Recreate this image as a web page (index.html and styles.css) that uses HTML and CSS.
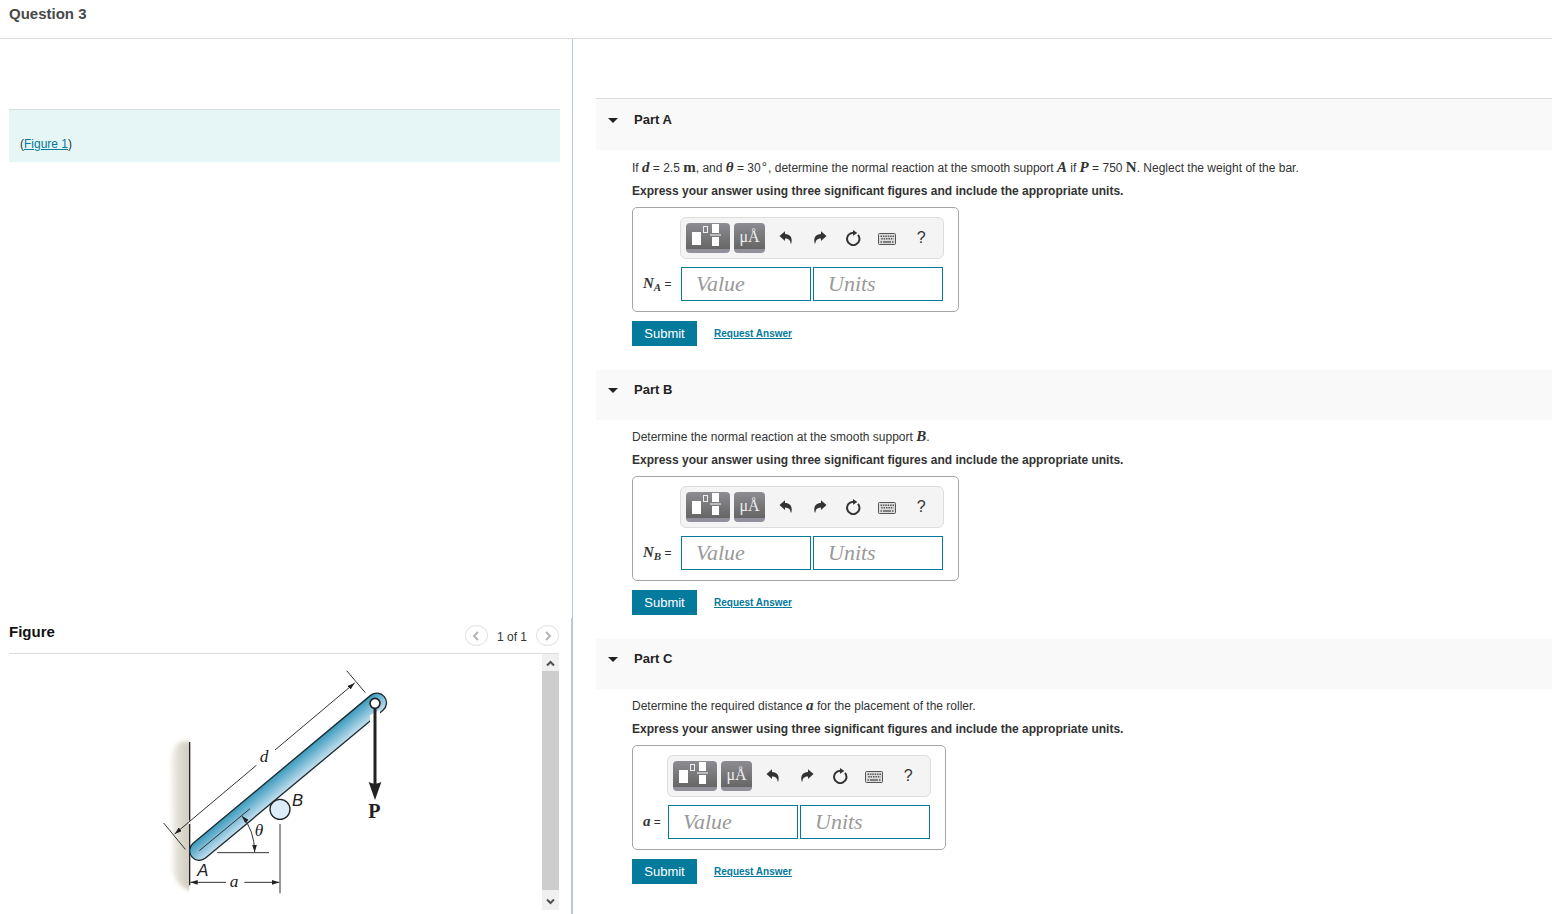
FILE: index.html
```html
<!DOCTYPE html>
<html lang="en">
  <head>
    <meta charset="UTF-8" />
    <meta name="viewport" content="width=device-width, initial-scale=1.0" />
    <title>Question 3</title>
    <link rel="stylesheet" href="styles.css">
  </head>
  <body>
    <!-- Shared toolbar icons -->
    <svg class="sprite" aria-hidden="true">
      <symbol id="icon-templates" viewBox="0 0 44 30">
        <rect x="6" y="9" width="9" height="13" fill="#fff" />
        <rect x="17.5" y="3.500" width="4" height="6" fill="none" stroke="#eee" />
        <rect x="26" y="1" width="7" height="9" fill="#fff" />
        <rect x="24" y="11" width="11" height="2" fill="#bbb" />
        <rect x="26" y="14" width="7" height="9" fill="#fff" />
      </symbol>
      <symbol id="icon-undo" viewBox="0 0 14 14">
        <path d="M0.500 5 6 0.300V3C11 3 13.800 6.500 12.300 12.500L11.600 12.500C11.500 9 9.500 7.600 6 7.500V10Z" fill="#333" />
      </symbol>
      <symbol id="icon-reset" viewBox="0 0 16 16">
        <path d="M8.500 2.700A6.200 6.200 0 1 0 13 4.900" fill="none" stroke="#333" stroke-width="2" />
        <path d="M8 0 12.300 2.900 8 5.800Z" fill="#333" />
      </symbol>
      <symbol id="icon-keyboard" viewBox="0 0 18 12">
        <rect x="0.500" y="0.500" width="17" height="11" rx="1" fill="#ddd" stroke="#555" />
        <path d="M2.500 3.200H16M3.200 5.700H15.500M2.500 9H4M14 9H15.500" stroke="#555" stroke-width="1.400" stroke-dasharray="1.500 0.900" />
        <path d="M5 9H13" stroke="#555" stroke-width="1.400" />
      </symbol>
    </svg>

    <header class="page-header">
      <h1>Question 3</h1>
    </header>

    <div class="page">
      <aside class="left-pane">
        <div class="intro">(<a href="#figure">Figure 1</a>)</div>

        <section class="figure" id="figure">
          <div class="figure-header">
            <h2>Figure</h2>
            <div class="pager">
              <button type="button" class="pager-button" aria-label="Previous figure">
                <svg width="8" height="10" viewBox="0 0 8 10"><path d="M6 1 2 5 6 9" /></svg>
              </button>
              <span>1 of 1</span>
              <button type="button" class="pager-button" aria-label="Next figure">
                <svg width="8" height="10" viewBox="0 0 8 10"><path d="M2 1 6 5 2 9" /></svg>
              </button>
            </div>
          </div>
          <div class="figure-body">
            <div class="figure-view">
              <svg class="diagram" width="250" height="245" viewBox="0 0 750 735" role="img" aria-label="Bar on a wall and a roller">
                <defs>
                  <linearGradient id="wall" x1="0" x2="1">
                    <stop offset="0" stop-color="#f4f3ee" />
                    <stop offset="0.450" stop-color="#dcd9cd" />
                    <stop offset="1" stop-color="#cbc7b9" />
                  </linearGradient>
                  <linearGradient id="bar" x1="0" y1="0" x2="0" y2="1">
                    <stop offset="0" stop-color="#3a9aba" />
                    <stop offset="0.400" stop-color="#71b5d1" />
                    <stop offset="1" stop-color="#c5e0ee" />
                  </linearGradient>
                  <filter id="soft" x="-30%" y="-10%" width="160%" height="120%">
                    <feGaussianBlur stdDeviation="6" />
                  </filter>
                  <clipPath id="wall-side">
                    <path d="M0 0H118V735H0Z" />
                  </clipPath>
                  <marker id="arrow" viewBox="0 0 22 14" refX="22" refY="7" markerWidth="22" markerHeight="14" markerUnits="userSpaceOnUse" orient="auto-start-reverse">
                    <path d="M0 0 22 7 0 14Z" fill="#222" />
                  </marker>
                </defs>

                <g clip-path="url(#wall-side)">
                  <path d="M130 244H104Q66 248 62 305L68 640Q84 684 130 696Z" fill="url(#wall)" filter="url(#soft)" />
                </g>
                <path d="M119 246V676" stroke="#222" stroke-width="4" />
                <path d="M119 482V492" stroke="#fff" stroke-width="6" />

                <!-- bar, drawn level and then turned about its pin -->
                <g transform="translate(148 572) rotate(-39.800)">
                  <path d="M0 -29H693A29 29 0 0 1 693 29H0A29 29 0 0 1 0 -29Z" fill="url(#bar)" stroke="#1c2a33" stroke-width="4" />
                </g>
                <path d="M660 166V190L690 170V150Z" fill="#fff" />

                <g stroke="#333" stroke-width="3" fill="none">
                  <path d="M590 32 646 98M41 489 106 568" />
                  <path d="M375 270 614 69" marker-end="url(#arrow)" />
                  <path d="M319 316 74 522" marker-end="url(#arrow)" />
                  <path d="M148 572 300 446M202 578H357M390 492V700" />
                  <path d="M276 468Q313 510 314 577" marker-start="url(#arrow)" marker-end="url(#arrow)" />
                  <path d="M228 667H121" marker-end="url(#arrow)" />
                  <path d="M283 667H388" marker-end="url(#arrow)" />
                </g>

                <circle cx="390" cy="448" r="30" fill="#dcecf8" stroke="#222" stroke-width="4" />
                <circle cx="675" cy="130" r="15" fill="#fff" stroke="#222" stroke-width="5" />
                <path d="M675 147V372" stroke="#222" stroke-width="9" />
                <path d="M656 366Q675 376 694 366L675 420Z" fill="#222" />

                <g fill="#222">
                  <text class="diagram-serif" x="329" y="306">d</text>
                  <text class="diagram-serif" x="314" y="528">θ</text>
                  <text class="diagram-serif" x="239" y="682">a</text>
                  <text class="diagram-sans" x="426" y="438">B</text>
                  <text class="diagram-sans" x="142" y="648">A</text>
                  <text class="diagram-force" x="655" y="475">P</text>
                </g>
              </svg>
            </div>
            <div class="scrollbar">
              <button type="button" aria-label="Scroll up">
                <svg width="9" height="7" viewBox="0 0 9 7"><path d="M1 5.500 4.500 2 8 5.500" /></svg>
              </button>
              <div class="scroll-thumb"></div>
              <button type="button" aria-label="Scroll down">
                <svg width="9" height="7" viewBox="0 0 9 7"><path d="M1 1.500 4.500 5 8 1.500" /></svg>
              </button>
            </div>
          </div>
        </section>
      </aside>

      <main class="parts">
        <section class="part">
          <h2 class="part-header"><span class="caret"></span>Part A</h2>
          <div class="part-body">
            <p>If <i class="math">d</i> = 2.5 <b class="math">m</b>, and <i class="math">θ</i> = 30<span class="degree">∘</span>, determine the normal reaction at the smooth support <i class="math">A</i> if <i class="math">P</i> = 750 <b class="math">N</b>. Neglect the weight of the bar.</p>
            <p class="instructions">Express your answer using three significant figures and include the appropriate units.</p>
            <div class="answer" data-label="N" data-sub="A"></div>
            <div class="actions">
              <button type="button" class="submit">Submit</button>
              <a href="#request">Request Answer</a>
            </div>
          </div>
        </section>

        <section class="part">
          <h2 class="part-header"><span class="caret"></span>Part B</h2>
          <div class="part-body">
            <p>Determine the normal reaction at the smooth support <i class="math">B</i>.</p>
            <p class="instructions">Express your answer using three significant figures and include the appropriate units.</p>
            <div class="answer" data-label="N" data-sub="B"></div>
            <div class="actions">
              <button type="button" class="submit">Submit</button>
              <a href="#request">Request Answer</a>
            </div>
          </div>
        </section>

        <section class="part">
          <h2 class="part-header"><span class="caret"></span>Part C</h2>
          <div class="part-body">
            <p>Determine the required distance <i class="math">a</i> for the placement of the roller.</p>
            <p class="instructions">Express your answer using three significant figures and include the appropriate units.</p>
            <div class="answer answer-short" data-label="a" data-sub=""></div>
            <div class="actions">
              <button type="button" class="submit">Submit</button>
              <a href="#request">Request Answer</a>
            </div>
          </div>
        </section>
      </main>
    </div>

    <script>
      // Every part has the same toolbar and value/units pair
      document.querySelectorAll(".answer").forEach((answer, idx) => {
        const { label, sub } = answer.dataset;
        answer.innerHTML = `
    <div class="toolbar">
      <button type="button" class="key key-wide" aria-label="Templates"><svg width="44" height="30"><use href="#icon-templates" /></svg></button>
      <button type="button" class="key" aria-label="Symbols">μÅ</button>
      <button type="button" class="tool" aria-label="Undo"><svg width="14" height="14"><use href="#icon-undo" /></svg></button>
      <button type="button" class="tool" aria-label="Redo"><svg class="flip" width="14" height="14"><use href="#icon-undo" /></svg></button>
      <button type="button" class="tool" aria-label="Reset"><svg width="16" height="16"><use href="#icon-reset" /></svg></button>
      <button type="button" class="tool tool-keyboard" aria-label="Keyboard shortcuts"><svg width="18" height="12"><use href="#icon-keyboard" /></svg></button>
      <button type="button" class="tool" aria-label="Help">?</button>
    </div>
    <label class="answer-label" for="value-${idx}"><span><i class="math">${label}</i>${sub ? `<sub class="math">${sub}</sub>` : ""} =</span></label>
    <div class="fields">
      <input type="text" id="value-${idx}" placeholder="Value" />
      <input type="text" id="units-${idx}" placeholder="Units" aria-label="Units" />
    </div>
  `;
      });
    </script>
  </body>
</html>
```
FILE: styles.css
```css
* {
  box-sizing: border-box;
}
body {
  font-family: "Liberation Sans", Arial, sans-serif;
  font-size: 12px;
  line-height: 18px;
  color: #333;
  background: #fff;
  margin: 0;
  display: flex;
  flex-direction: column;
  min-height: 100vh;
}
h1,
h2,
p {
  margin: 0;
}
a {
  color: #047a9c;
}
button {
  font-family: inherit;
  border: none;
  padding: 0;
  cursor: pointer;
}
.sprite {
  display: none;
}

.page-header {
  padding: 5px 9px 15px;
  border-bottom: 1px solid #ddd;
}
.page-header h1 {
  font-size: 15px;
  line-height: 18px;
  color: #484848;
}
.page {
  flex: 1;
  display: flex;
}

/* left pane */
.left-pane {
  flex: 0 0 573px;
  display: flex;
  flex-direction: column;
  justify-content: space-between;
  padding-top: 70px;
  border-right: 1px solid #b8c9db;
}
.intro {
  margin: 0 12px 0 9px;
  padding: 25px 11px 9px;
  border-top: 1px solid #d5dfdf;
  background: #e6f6f7;
}
.figure {
  padding: 0 12px 4px 9px;
  border-right: 1px solid #b8c9db;
}
.figure-header {
  display: flex;
  justify-content: space-between;
  height: 36px;
  border-bottom: 1px solid #ddd;
}
.figure-header h2 {
  font-size: 15px;
  line-height: 28px;
  color: #111;
}
.pager {
  display: flex;
  align-items: center;
  gap: 9px;
}
.pager span {
  padding-top: 3px;
}
.pager-button {
  display: flex;
  align-items: center;
  justify-content: center;
  width: 23px;
  height: 21px;
  border: 1px solid #e4e4e4;
  border-radius: 50%;
  background: #fff;
}
.pager-button path {
  fill: none;
  stroke: #b5b5b5;
  stroke-width: 2;
}
.figure-body {
  display: flex;
}
.figure-view {
  flex: 1;
  padding: 6px 2px 5px 0;
}
.diagram {
  display: block;
  margin: 0 auto;
}
.diagram-serif {
  font: italic 52px "Liberation Serif", serif;
}
.diagram-sans {
  font: italic 50px "Liberation Sans", sans-serif;
}
.diagram-force {
  font: bold 60px "Liberation Serif", serif;
}
.scrollbar {
  display: flex;
  flex-direction: column;
  width: 17px;
  background: #f0f0f0;
}
.scrollbar button {
  height: 17px;
  background: #f0f0f0;
}
.scrollbar button:last-child {
  height: 20px;
}
.scrollbar path {
  fill: none;
  stroke: #505050;
  stroke-width: 2;
}
.scroll-thumb {
  flex: 1;
  background: #cdcdcd;
}

/* parts */
.parts {
  flex: 1;
  padding: 59px 0 0 23px;
}
.part-header {
  display: flex;
  align-items: center;
  gap: 16px;
  padding: 10px 12px 20px;
  background: #f9f9f9;
  font-size: 13px;
  line-height: 20px;
  color: #222;
}
.part:first-child .part-header {
  padding-top: 11px;
  border-top: 1px solid #ddd;
}
.caret {
  border: 5px solid transparent;
  border-top-color: #222;
  border-bottom: none;
}
.part-body {
  padding: 8px 36px 24px;
}
.math {
  font-family: "Liberation Serif", serif;
  font-size: 15px;
  font-weight: bold;
  line-height: 1;
}
.degree {
  font-family: "DejaVu Sans", sans-serif;
  font-size: 12px;
  line-height: 1;
  vertical-align: 4px;
}
.instructions {
  margin-top: 5px;
  font-weight: bold;
}
.answer {
  display: inline-grid;
  grid-template-columns: 37px 264px;
  row-gap: 8px;
  margin-top: 7px;
  padding: 9px 14px 10px 10px;
  border: 1px solid #a6a6a6;
  border-radius: 5px;
  vertical-align: top;
}
.answer-short {
  grid-template-columns: 24px 264px;
}
.toolbar {
  grid-column: 2;
  display: flex;
  align-items: center;
  height: 42px;
  padding: 0 5px;
  border: 1px solid #ddd;
  border-radius: 6px;
  background: #f4f4f4;
}
.key {
  width: 31px;
  height: 30px;
  margin-right: 4px;
  padding-bottom: 3px;
  border-radius: 4px;
  background: linear-gradient(#8c8c92, #666 86%, #92909c 87%);
  color: #eee;
  font: 16px/26px "Liberation Serif", serif;
}
.key-wide {
  width: 44px;
  padding: 0;
}
.key svg {
  display: block;
}
.tool {
  flex: 1;
  display: flex;
  align-items: center;
  justify-content: center;
  height: 30px;
  background: none;
  color: #333;
  font-size: 16px;
}
.tool-keyboard {
  padding-top: 2px;
}
.flip {
  transform: scaleX(-1);
}
.answer-label {
  display: flex;
  align-items: center;
}
.answer-label sub.math {
  font-size: 11px;
  font-style: italic;
  vertical-align: -3px;
}
.fields {
  display: flex;
  gap: 2px;
  padding: 0 1px;
}
.fields input {
  flex: 1;
  min-width: 0;
  height: 34px;
  padding: 0 14px;
  border: 1px solid #047a9c;
  color: #333;
  font: italic 22px "Liberation Serif", serif;
}
.fields input::placeholder {
  color: #999;
}
.actions {
  display: flex;
  align-items: center;
  gap: 17px;
  margin-top: 9px;
}
.submit {
  width: 65px;
  height: 25px;
  background: #047a9c;
  color: #fff;
  font-size: 13px;
}
.actions a {
  font-size: 10px;
  font-weight: bold;
}

@media screen and (max-width: 900px) {
  .page {
    flex-direction: column;
  }
  .left-pane {
    flex-basis: auto;
  }
}
```
